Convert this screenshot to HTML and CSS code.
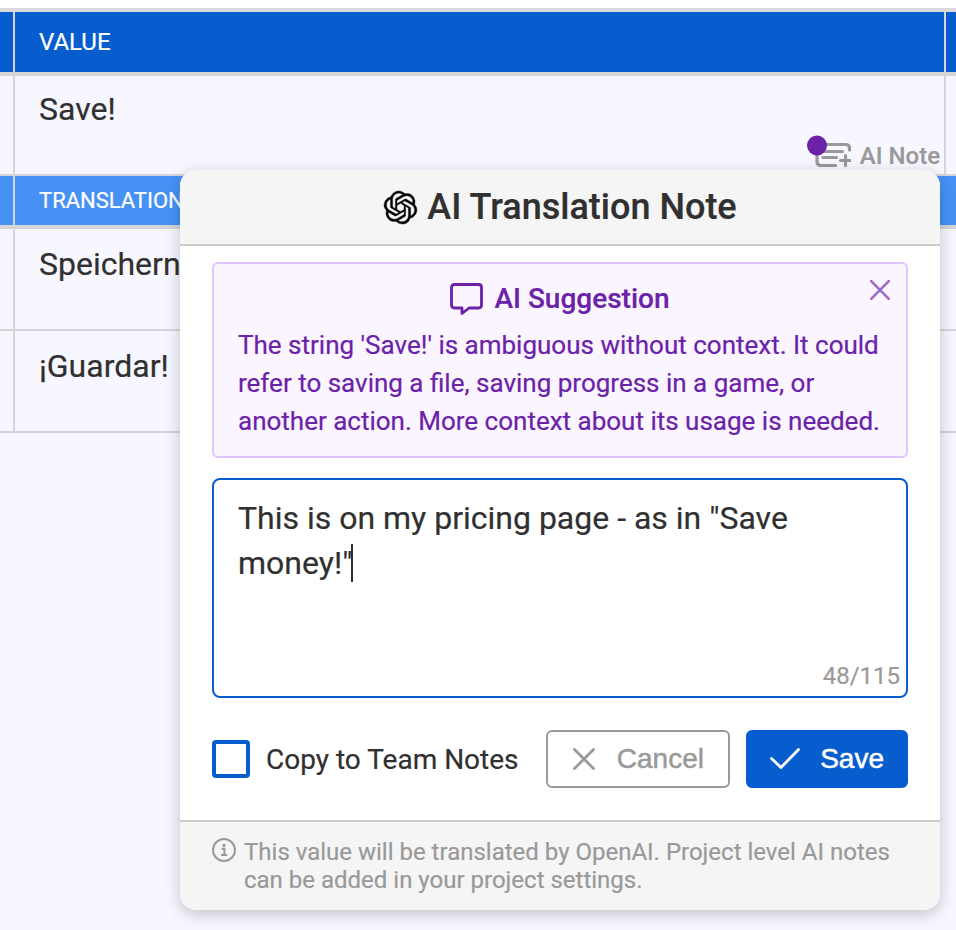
FILE: index.html
```
<!DOCTYPE html>
<html lang="en">
<head>
    <meta charset="UTF-8">
    <title>AI Translation Note</title>
    <link rel="stylesheet" href="styles.css">
</head>
<body>

<div class="table">
    <div class="row row-header">
        <div class="cell"></div>
        <div class="cell">VALUE</div>
        <div class="cell"></div>
    </div>
    <div class="row row-source">
        <div class="cell"></div>
        <div class="cell">
            <span>Save!</span>
            <div class="note-link">
                <svg class="note-icon" width="44" height="34" viewBox="0 0 44 34" fill="none" stroke="#999" stroke-width="3.200" stroke-linecap="round" stroke-linejoin="round">
                    <path d="M16 9.500H38.500Q42.500 9.500 42.500 13V15M15 16.500H35.500M16 22.500H29.500M10 18V26.500Q10 30.500 14 30.500H28.500M38.500 20.500V30.500M33.500 25.500H43.500"/>
                    <circle cx="10" cy="10.500" r="10" fill="#6b21a8" stroke="none"/>
                </svg>
                <span>AI Note</span>
            </div>
        </div>
        <div class="cell"></div>
    </div>
    <div class="row row-subheader row-wide">
        <div class="cell"></div>
        <div class="cell">TRANSLATION</div>
    </div>
    <div class="row row-wide">
        <div class="cell"></div>
        <div class="cell">Speichern!</div>
    </div>
    <div class="row row-wide">
        <div class="cell"></div>
        <div class="cell">¡Guardar!</div>
    </div>
</div>

<div class="popup">
    <div class="popup-header">
        <svg class="logo" width="33" height="33" viewBox="0 0 24 24" stroke="#000" stroke-width="0.300">
            <path d="M22.2819 9.8211a5.9847 5.9847 0 0 0-.5157-4.9108 6.0462 6.0462 0 0 0-6.5098-2.9A6.0651 6.0651 0 0 0 4.9807 4.1818a5.9847 5.9847 0 0 0-3.9977 2.9 6.0462 6.0462 0 0 0 .7427 7.0966 5.98 5.98 0 0 0 .511 4.9107 6.051 6.051 0 0 0 6.5146 2.9001A5.9847 5.9847 0 0 0 13.2599 24a6.0557 6.0557 0 0 0 5.7718-4.2058 5.9894 5.9894 0 0 0 3.9977-2.9001 6.0557 6.0557 0 0 0-.7475-7.0729zm-9.022 12.6081a4.4755 4.4755 0 0 1-2.8764-1.0408l.1419-.0804 4.7783-2.7582a.7948.7948 0 0 0 .3927-.6813v-6.7369l2.02 1.1686a.071.071 0 0 1 .038.052v5.5826a4.504 4.504 0 0 1-4.4945 4.4944zm-9.6607-4.1254a4.4708 4.4708 0 0 1-.5346-3.0137l.142.0852 4.783 2.7582a.7712.7712 0 0 0 .7806 0l5.8428-3.3685v2.3324a.0804.0804 0 0 1-.0332.0615L9.74 19.9502a4.4992 4.4992 0 0 1-6.1408-1.6464zM2.3408 7.8956a4.485 4.485 0 0 1 2.3655-1.9728V11.6a.7664.7664 0 0 0 .3879.6765l5.8144 3.3543-2.0201 1.1685a.0757.0757 0 0 1-.071 0l-4.8303-2.7865A4.504 4.504 0 0 1 2.3408 7.872zm16.5963 3.8558L13.1038 8.364 15.1192 7.2a.0757.0757 0 0 1 .071 0l4.8303 2.7913a4.4944 4.4944 0 0 1-.6765 8.1042v-5.6772a.79.79 0 0 0-.407-.667zm2.0107-3.0231l-.142-.0852-4.7735-2.7818a.7759.7759 0 0 0-.7854 0L9.409 9.2297V6.8974a.0662.0662 0 0 1 .0284-.0615l4.8303-2.7866a4.4992 4.4992 0 0 1 6.6802 4.66zM8.3065 12.863l-2.02-1.1638a.0804.0804 0 0 1-.038-.0567V6.0742a4.4992 4.4992 0 0 1 7.3757-3.4537l-.142.0805L8.704 5.459a.7948.7948 0 0 0-.3927.6813zm1.0976-2.3654l2.602-1.4998 2.6069 1.4998v2.9994l-2.5974 1.4997-2.6067-1.4997Z"/>
        </svg>
        <span>AI Translation Note</span>
    </div>

    <div class="popup-body">
        <div class="suggestion">
            <div class="suggestion-title">
                <svg width="33" height="33" viewBox="0 0 33 33" fill="none" stroke="#6b21a8" stroke-width="2.800" stroke-linejoin="round">
                    <path d="M4.500 1.500H28.500Q31.500 1.500 31.500 4.500V22Q31.500 25 28.500 25H19L12 30.500V25H4.500Q1.500 25 1.500 22V4.500Q1.500 1.500 4.500 1.500Z"/>
                </svg>
                <span>AI Suggestion</span>
            </div>
            <p>The string 'Save!' is ambiguous without context. It could refer to saving a file, saving progress in a game, or another action. More context about its usage is needed.</p>
            <svg class="close" width="20" height="20" viewBox="0 0 20 20" fill="none" stroke="#6b21a8" stroke-width="2.600" stroke-linecap="round">
                <path d="M1.200 1.200L18.800 18.800M18.800 1.200L1.200 18.800"/>
            </svg>
        </div>

        <div class="note-input">This is on my pricing page - as in "Save money!"<span class="caret"></span>
            <span class="counter">48/115</span>
        </div>

        <div class="actions">
            <span class="checkbox"></span>
            <span class="checkbox-label">Copy to Team Notes</span>
            <button class="btn btn-cancel">
                <svg width="22" height="22" viewBox="0 0 22 22" fill="none" stroke="#999" stroke-width="2.800" stroke-linecap="round">
                    <path d="M1.500 1.500L20.500 20.500M20.500 1.500L1.500 20.500"/>
                </svg>
                <span>Cancel</span>
            </button>
            <button class="btn btn-save">
                <svg width="30" height="22" viewBox="0 0 30 22" fill="none" stroke="#fff" stroke-width="2.800" stroke-linecap="round" stroke-linejoin="round">
                    <path d="M1.500 10.500L11 19.500L28.500 1.500"/>
                </svg>
                <span>Save</span>
            </button>
        </div>
    </div>

    <div class="popup-footer">
        <svg width="24" height="24" viewBox="0 0 24 24" fill="none" stroke="#999" stroke-width="2">
            <circle cx="12" cy="12" r="11"/>
            <path d="M9.500 10.800H12.400V17M9 17H15.200"/>
            <circle cx="12" cy="7.300" r="1.600" fill="#999" stroke="none"/>
        </svg>
        <p>This value will be translated by OpenAI. Project level AI notes can be added in your project settings.</p>
    </div>
</div>

</body>
</html>
```
FILE: styles.css
```
* {
    box-sizing: border-box;
}

body {
    font-family: Roboto, sans-serif;
    background-color: #f7f7ff;
    color: #303030;
    height: 930px;
    margin: 0;
    overflow: hidden;
    -webkit-text-stroke: 0.2px;
}

p {
    margin: 0;
}

.table {
    border-top: 8px solid #fff;
    font-size: 32px;
    line-height: 38px;
}

.row {
    display: grid;
    grid-template-columns: 15px 931px 10px;
    height: 102px;
    border-bottom: 2px solid #d6d6da;
}

.row-wide {
    grid-template-columns: 15px 941px;
}

.cell {
    border-right: 2px solid #d6d6da;
    padding: 16px 0 0 24px;
    white-space: nowrap;
}

.cell:first-child {
    padding: 0;
}

.cell:last-child {
    border-right: none;
}

.row-header {
    height: 68px;
    background-color: #085dce;
    color: #fff;
    font-size: 24px;
    border-top: 4px solid #d9d9dc;
    border-bottom: 4px solid #d6d6d8;
}

.row-header .cell {
    padding-top: 11px;
}

.row-source {
    height: 100px;
}

.row-source .cell {
    display: flex;
    flex-direction: column;
    padding-top: 14px;
}

.row-subheader {
    height: 53px;
    background-color: #4791f5;
    color: #fff;
    font-size: 22px;
    border-bottom: 4px solid #d6d6d8;
}

.row-subheader .cell {
    padding-top: 6px;
}

.note-link {
    display: flex;
    justify-content: flex-end;
    gap: 9px;
    margin-top: 7px;
    margin-bottom: -8px;
    padding-right: 4px;
    color: #999;
    font-size: 24px;
    font-weight: 500;
    line-height: 42px;
}

.popup {
    position: absolute;
    left: 180px;
    top: 170px;
    width: 760px;
    height: 740px;
    display: flex;
    flex-direction: column;
    background-color: #fff;
    border-radius: 16px;
    box-shadow: 0 4px 16px rgba(0, 0, 0, 0.22);
    overflow: hidden;
}

.popup-header {
    display: flex;
    align-items: center;
    justify-content: center;
    gap: 10px;
    height: 76px;
    padding-left: 1px;
    background-color: #f5f5f5;
    border-bottom: 2px solid #ccc;
    font-size: 36px;
    font-weight: 500;
}

.logo {
    overflow: visible;
}

.popup-body {
    flex: 1;
    padding: 16px 32px 0;
}

.suggestion {
    position: relative;
    height: 196px;
    padding: 16px 24px 0;
    background-color: #faf5ff;
    border: 2px solid #dfc3fd;
    border-radius: 6px;
    color: #6b21a8;
    font-size: 26px;
    line-height: 38px;
}

.suggestion-title {
    display: flex;
    align-items: center;
    justify-content: center;
    gap: 11px;
    height: 38px;
    margin-bottom: 8px;
    font-size: 28px;
    font-weight: 500;
}

.close {
    position: absolute;
    top: 16px;
    right: 16px;
    opacity: 0.65;
}

.note-input {
    position: relative;
    height: 220px;
    margin-top: 20px;
    padding: 16px 24px;
    border: 2px solid #085dce;
    border-radius: 8px;
    font-size: 32px;
    line-height: 45px;
}

.caret {
    display: inline-block;
    width: 2px;
    height: 38px;
    margin-left: -1px;
    background-color: #303030;
    vertical-align: -8px;
}

.counter {
    position: absolute;
    right: 6px;
    bottom: 6px;
    color: #999;
    font-size: 24px;
    line-height: 28px;
}

.actions {
    display: flex;
    align-items: center;
    margin-top: 32px;
}

.checkbox {
    width: 38px;
    height: 38px;
    border: 4px solid #085dce;
    border-radius: 4px;
}

.checkbox-label {
    margin-left: 16px;
    margin-right: auto;
    font-size: 28px;
}

.btn {
    display: flex;
    align-items: center;
    justify-content: space-between;
    height: 58px;
    padding: 0 24px;
    border: 2px solid #999;
    border-radius: 6px;
    background-color: #fff;
    color: #999;
    font-family: "Liberation Sans", Arial, sans-serif;
    font-size: 28px;
    -webkit-text-stroke: 0.5px;
}

.btn-cancel {
    width: 184px;
    padding: 0 24px 0 25px;
}

.btn-save {
    width: 162px;
    margin-left: 16px;
    padding: 0 22px;
    border-color: #085dce;
    background-color: #085dce;
    color: #fff;
}

.popup-footer {
    display: flex;
    gap: 8px;
    height: 90px;
    padding: 16px 32px;
    background-color: #f5f5f5;
    border-top: 2px solid #ccc;
    color: #999;
    font-size: 24px;
    line-height: 28px;
}

.popup-footer svg {
    flex: none;
}
```
